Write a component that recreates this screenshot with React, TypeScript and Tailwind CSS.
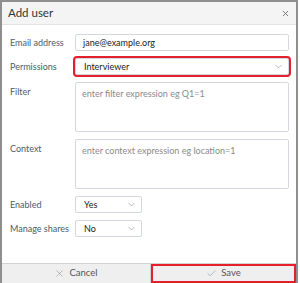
import { X, Check, ChevronDown } from 'lucide-react';

function Row({ label, top, children }: { label: string; top?: boolean; children: React.ReactNode }) {
  return (
    <div className={`flex ${top ? 'items-start' : 'items-center'}`}>
      <div className={`w-[65px] shrink-0 whitespace-nowrap text-[9px] text-[#4d5c6b] ${top ? 'pt-[3px]' : ''}`}>{label}</div>
      {children}
    </div>
  );
}

function Select({ value, width, highlight }: { value: string; width?: string; highlight?: boolean }) {
  return (
    <div
      className={`h-[17px] ${width ?? 'flex-1'} flex items-center justify-between pl-[8px] pr-[4px] border border-[#d3d9de] rounded-[2px] bg-white ${
        highlight ? 'outline-2 outline-[#e4202c]' : ''
      }`}
    >
      <span className="text-[9px] text-[#222]">{value}</span>
      <ChevronDown className="size-[11px] text-[#7f8a95]" strokeWidth={1.3} />
    </div>
  );
}

export default function App() {
  return (
    <div className="w-[300px] h-[283px] bg-white overflow-hidden font-['Lato',sans-serif]">
      <div className="w-[298px] h-[283px] border-2 border-b-0 border-[#8f8f8f] flex flex-col">
        {/* Header */}
        <div className="h-[23px] shrink-0 bg-[#f4f4f4] border-b border-[#e3e3e3] flex items-center justify-between pl-[6px] pr-[6px]">
          <span className="text-[11.5px] text-[#333]">Add user</span>
          <X className="size-[9px] text-[#777]" strokeWidth={2.5} />
        </div>

        {/* Body */}
        <div className="flex-1 pt-[9px] pl-[8px] pr-[7px] flex flex-col gap-[7px]">
          <Row label="Email address">
            <div className="h-[17px] flex-1 flex items-center px-[7px] border border-[#d3d9de] rounded-[2px] text-[9px] text-[#222]">
              jane@example.org
            </div>
          </Row>
          <Row label="Permissions">
            <Select value="Interviewer" highlight />
          </Row>
          <Row label="Filter" top>
            <div className="h-[50px] flex-1 px-[6px] pt-[4px] border border-[#d3d9de] rounded-[2px] text-[9px] text-[#8a8a8a]">
              enter filter expression eg Q1=1
            </div>
          </Row>
          <Row label="Context" top>
            <div className="h-[50px] flex-1 px-[6px] pt-[4px] border border-[#d3d9de] rounded-[2px] text-[9px] text-[#8a8a8a]">
              enter context expression eg location=1
            </div>
          </Row>
          <Row label="Enabled">
            <Select value="Yes" width="w-[67px]" />
          </Row>
          <Row label="Manage shares">
            <Select value="No" width="w-[67px]" />
          </Row>
        </div>

        {/* Footer */}
        <div className="h-[20px] shrink-0 bg-[#efefef] border-t border-[#d2d2d2] flex">
          <button className="w-[149px] h-full flex items-center justify-center gap-[4px] border-r border-[#d2d2d2] text-[9.5px] text-[#555]">
            <X className="size-[11px] text-[#888]" strokeWidth={1.2} />
            Cancel
          </button>
          <button className="flex-1 h-[19px] flex items-center justify-center gap-[4px] border-2 border-[#e4202c] text-[9.5px] text-[#555]">
            <Check className="size-[11px] text-[#888]" strokeWidth={1.2} />
            Save
          </button>
        </div>
      </div>
    </div>
  );
}
